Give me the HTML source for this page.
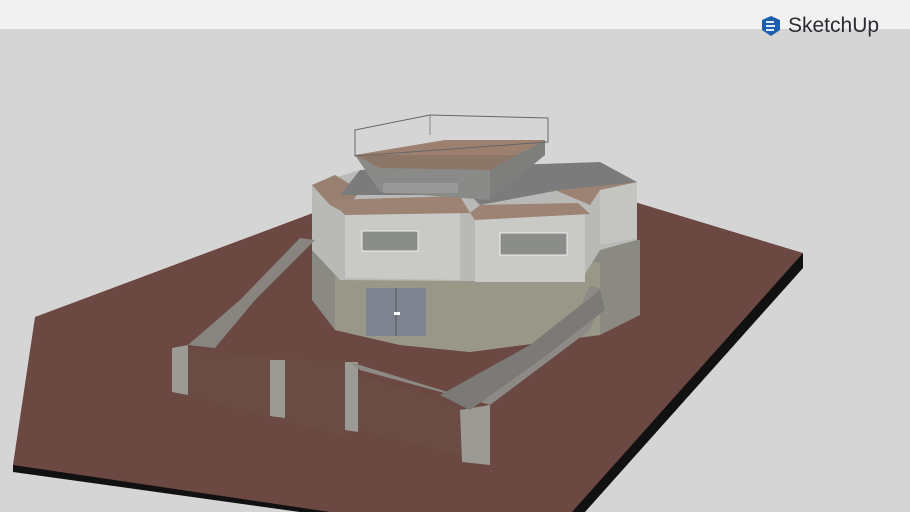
<!DOCTYPE html>
<html><head><meta charset="utf-8"><style>
body{margin:0;width:910px;height:512px;overflow:hidden;background:#d5d5d5;font-family:"Liberation Sans",sans-serif}
.top{position:absolute;left:0;top:0;width:910px;height:29px;background:#f1f1f1}
.logo{position:absolute;left:760px;top:14px;display:flex;align-items:center;gap:6px;font-size:21px;color:#2b2b33}
svg.m{position:absolute;left:0;top:0}
</style></head><body>
<div class="top"></div>
<svg class="m" width="910" height="512" viewBox="0 0 910 512">
<!-- ground -->
<polygon points="13,465 13,472 300,512 585,512 803,268 803,253" fill="#111"/>
<polygon points="35,317 313,213 638,203 803,253 572,512 330,512 13,465" fill="#6b4842"/>
<!-- lower stone octagon -->
<polygon points="312,240 640,240 640,315 600,335 470,352 400,345 335,330 312,300" fill="#8a8a82"/>
<polygon points="335,262 600,262 600,335 470,352 400,345 335,330" fill="#989788"/>
<rect x="366" y="288" width="60" height="48" fill="#7d8490"/>
<line x1="396" y1="288" x2="396" y2="336" stroke="#555"/>
<rect x="394" y="312" width="6" height="3" fill="#fff"/>
<!-- upper white walls -->
<polygon points="312,185 360,170 600,175 637,182 637,240 600,250 580,282 340,280 312,250" fill="#b9b9b7"/>
<polygon points="345,213 460,210 460,280 345,278" fill="#c9c9c6"/>
<polygon points="475,212 585,212 585,282 475,282" fill="#c9c9c6"/>
<polygon points="600,188 637,182 637,238 600,245" fill="#c4c4c1"/>
<rect x="362" y="231" width="56" height="20" fill="#8a8d89" stroke="#eee"/>
<rect x="500" y="233" width="67" height="22" fill="#8a8d89" stroke="#eee"/>
<!-- roofs -->
<polygon points="312,185 335,175 360,190 345,213 330,205" fill="#9a8070"/>
<polygon points="330,200 460,196 470,213 345,215" fill="#9c8373"/>
<polygon points="470,213 480,205 578,203 590,214 475,220" fill="#9c8373"/>
<polygon points="555,190 600,176 637,182 600,190 590,205" fill="#9c8373"/>
<polygon points="360,170 600,162 637,182 560,190 480,205 470,195 340,195" fill="#7b7b7b"/>
<!-- top box -->
<polygon points="355,155 545,142 490,200 380,192" fill="#8a8a88"/>
<polygon points="355,155 445,140 545,140 545,155" fill="#9c8070"/>
<polygon points="355,155 545,155 490,170 380,168" fill="#8c7668"/>
<polygon points="490,170 545,140 545,155 490,200" fill="#7e7e7c"/>
<rect x="383" y="183" width="75" height="10" fill="#999"/>
<polygon points="355,130 430,115 548,118 548,142 355,156" fill="none" stroke="#666" stroke-width="1"/>
<line x1="430" y1="115" x2="430" y2="135" stroke="#888"/>
<!-- walls front -->
<polygon points="172,350 350,363 350,438 172,392" fill="#6a4c44"/>
<polygon points="355,375 480,410 480,460 355,430" fill="#6a4c44"/>
<polygon points="172,348 188,345 188,395 172,392" fill="#9c9a95"/>
<polygon points="270,360 285,360 285,418 270,416" fill="#9c9a95"/>
<polygon points="345,362 358,362 358,432 345,430" fill="#9c9a95"/>
<polygon points="460,410 490,405 490,465 462,462" fill="#9c9a95"/>
<polygon points="188,345 240,300 255,300 215,348" fill="#888580"/>
<polygon points="240,300 300,238 315,240 255,300" fill="#888580"/>
<polygon points="350,362 490,405 590,330 605,290 590,285 575,320 470,400 360,370" fill="#8d8a85"/>
<polygon points="440,395 530,345 600,290 605,310 540,360 470,410" fill="#7b7a76"/>
</svg>
<div class="logo"><svg width="22" height="22" viewBox="0 0 22 22"><path d="M11 1 L20 5 V15 L11 21 L2 15 V5 Z" fill="#1b5fae"/><path d="M6 7 H14 M6 11 H15 M6 15 H14" stroke="#fff" stroke-width="1.8" fill="none"/></svg><span>SketchUp</span></div>
</body></html>
